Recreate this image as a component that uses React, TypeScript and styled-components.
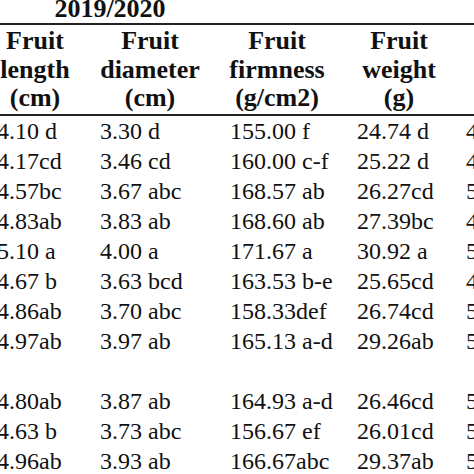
import styled, { createGlobalStyle } from "styled-components";

const GlobalStyle = createGlobalStyle`
	html, body {
		margin: 0;
		padding: 0;
		background: #fff;
		overflow: hidden;
	}
`

const Page = styled.div`
	width: 474px;
	height: 474px;
	overflow: hidden;
	margin-top: -3px;
	font-family: "Liberation Serif", "Times New Roman", serif;
	color: #111;
`

const Table = styled.table`
	table-layout: fixed;
	border-collapse: collapse;
	margin-left: -13px;
	width: 534px;
`

const TitleCell = styled.th`
	font-size: 26px;
	font-weight: bold;
	line-height: 24px;
	padding: 0 0 2px 16px;
	text-align: center;
	border-bottom: 2px solid #222;
`

const HeadRow = styled.tr`
	border-bottom: 2px solid #222;
`

const HeadCell = styled.th`
	font-size: 26px;
	font-weight: bold;
	line-height: 28.5px;
	padding: 2px 0 1px 0;
	text-align: center;
	vertical-align: top;
`

const Cell = styled.td<{ $pad: number }>`
	font-size: 24px;
	line-height: 30px;
	height: 30px;
	padding: 0 0 0 ${(p) => p.$pad}px;
	text-align: left;
	white-space: nowrap;
	overflow: visible;
`

const widths = [96, 134, 120, 124, 60]
const pads = [10, 17, 13, 20, 5]

const heads = [
	["Fruit", "length", "(cm)"],
	["Fruit", "diameter", "(cm)"],
	["Fruit", "firmness", "(g/cm2)"],
	["Fruit", "weight", "(g)"],
	[],
]

const rows: (string[] | null)[] = [
	["4.10 d", "3.30 d", "155.00 f", "24.74 d", "4"],
	["4.17cd", "3.46 cd", "160.00 c-f", "25.22 d", "4"],
	["4.57bc", "3.67 abc", "168.57 ab", "26.27cd", "5"],
	["4.83ab", "3.83 ab", "168.60 ab", "27.39bc", "4"],
	["5.10 a", "4.00 a", "171.67 a", "30.92 a", "5"],
	["4.67 b", "3.63 bcd", "163.53 b-e", "25.65cd", "4"],
	["4.86ab", "3.70 abc", "158.33def", "26.74cd", "5"],
	["4.97ab", "3.97 ab", "165.13 a-d", "29.26ab", "5"],
	null,
	["4.80ab", "3.87 ab", "164.93 a-d", "26.46cd", "5"],
	["4.63 b", "3.73 abc", "156.67 ef", "26.01cd", "5"],
	["4.96ab", "3.93 ab", "166.67abc", "29.37ab", "5"],
]

const App = () => {
	return (
		<Page>
			<GlobalStyle />
			<Table>
				<colgroup>
					{widths.map((w, i) => (
						<col key={i} style={{ width: w }} />
					))}
				</colgroup>
				<thead>
					<tr>
						<TitleCell colSpan={2}>2019/2020</TitleCell>
						<TitleCell colSpan={3}></TitleCell>
					</tr>
					<HeadRow>
						{heads.map((h, i) => (
							<HeadCell key={i}>
								{h.map((line, j) => (
									<div key={j}>{line}</div>
								))}
							</HeadCell>
						))}
					</HeadRow>
				</thead>
				<tbody>
					{rows.map((r, i) => (
						<tr key={i}>
							{(r ?? ["", "", "", "", ""]).map((v, j) => (
								<Cell key={j} $pad={pads[j]}>{v}</Cell>
							))}
						</tr>
					))}
				</tbody>
			</Table>
		</Page>
	)
}

export default App;
